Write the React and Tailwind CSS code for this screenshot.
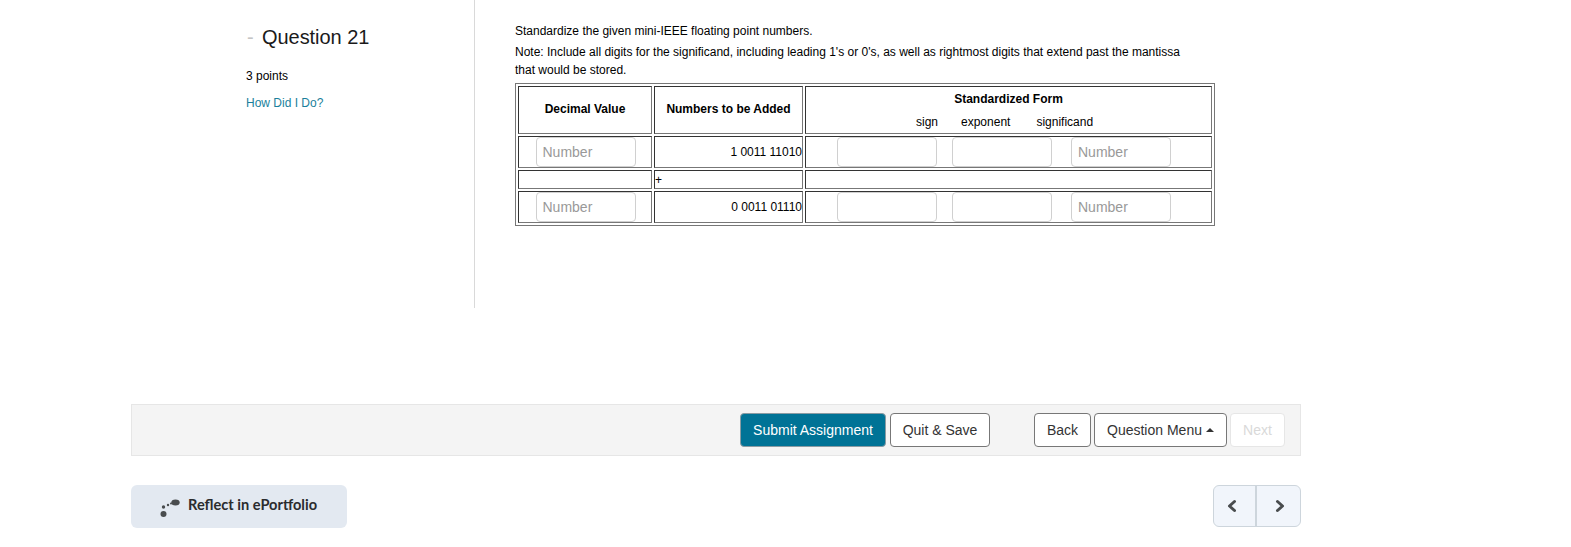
const numberInput = (placeholder, extra = '') => (
  <input
    readOnly
    placeholder={placeholder}
    className={`block w-[100px] h-[30px] px-[6px] bg-white border border-[#d0d0d0] rounded-[4px] text-[14px] placeholder:text-[#999999] outline-none ${extra}`}
  />
);

const cell = 'border border-t-[#333333] border-l-[#333333] border-r-[#777777] border-b-[#777777] p-0';

const btn = 'h-[34px] rounded-[4px] border text-[14px] flex items-center justify-center';

const StandardCells = () => (
  <td className={cell}>
    <div className="flex items-center h-[30px] pl-[31px]">
      {numberInput('')}
      {numberInput('', 'ml-[15px]')}
      {numberInput('Number', 'ml-[19px]')}
    </div>
  </td>
);

const App = () => (
  <div className="w-[1571px] h-[547px] bg-white text-black font-['Liberation_Sans',Arial,sans-serif] overflow-hidden">
    <div className="flex h-[308px]">
      {/* Question sidebar */}
      <div className="w-[475px] pl-[246px] border-r border-[#d9d9d9] shrink-0">
        <h2 className="flex items-center h-[24px] mt-[25px] text-[20px] leading-[24px] text-[#1a1a1a]">
          <span className="w-[16px] pl-[1px] text-[#c4c4c4]">-</span>
          <span className="tracking-[-0.05px]">Question 21</span>
        </h2>
        <p className="mt-[15px] text-[12px] leading-[24px]">3 points</p>
        <a className="block mt-[3px] text-[12px] leading-[24px] text-[#1a7f9c]">How Did I Do?</a>
      </div>

      {/* Question body */}
      <div className="pl-[40px] pt-[22px] text-[12px]">
        <p className="leading-[18px]">Standardize the given mini-IEEE floating point numbers.</p>
        <p className="mt-[3px] w-[680px] leading-[18px]">
          Note: Include all digits for the significand, including leading 1's or 0's, as well as rightmost digits that extend past the mantissa that would be stored.
        </p>
        <table className="mt-[4px] w-[700px] border border-[#777777] border-separate border-spacing-[2px] table-fixed">
          <colgroup>
            <col className="w-[134px]" />
            <col className="w-[149px]" />
            <col />
          </colgroup>
          <tbody>
            <tr className="h-[48px]">
              <td className={`${cell} text-center font-bold pb-[2px]`}>Decimal Value</td>
              <td className={`${cell} text-center font-bold pb-[2px]`}>Numbers to be Added</td>
              <td className={cell}>
                <div className="text-center font-bold leading-[18px]">Standardized Form</div>
                <div className="flex mt-[5px] leading-[18px] pl-[110px]">
                  <span>sign</span>
                  <span className="ml-[23px]">exponent</span>
                  <span className="ml-[26px]">significand</span>
                </div>
              </td>
            </tr>
            <tr className="h-[32px]">
              <td className={cell}><div className="flex justify-center pl-[1px]">{numberInput('Number')}</div></td>
              <td className={`${cell} text-right`}>1 0011 11010</td>
              <StandardCells />
            </tr>
            <tr className="h-[19px]">
              <td className={cell}></td>
              <td className={`${cell} leading-[14px]`}>+</td>
              <td className={cell}></td>
            </tr>
            <tr className="h-[32px]">
              <td className={cell}><div className="flex justify-center pl-[1px]">{numberInput('Number')}</div></td>
              <td className={`${cell} text-right`}>0 0011 01110</td>
              <StandardCells />
            </tr>
          </tbody>
        </table>
      </div>
    </div>

    {/* Assignment footer */}
    <div className="ml-[131px] mt-[96px] w-[1170px] h-[52px] bg-[#f4f4f4] border border-[#e6e6e6] flex items-center pl-[608px]">
      <button className={`${btn} w-[146px] bg-[#007396] border-[#8a9ba3] text-white`}>Submit Assignment</button>
      <button className={`${btn} w-[100px] ml-[4px] bg-white border-[#777777] text-[#333333]`}>Quit &amp; Save</button>
      <button className={`${btn} w-[57px] ml-[44px] bg-white border-[#777777] text-[#333333]`}>Back</button>
      <button className={`${btn} w-[133px] ml-[3px] bg-white border-[#777777] text-[#333333]`}>
        Question Menu
        <span className="ml-[4px] border-x-[4px] border-x-transparent border-b-[4px] border-b-[#333333]"></span>
      </button>
      <button className={`${btn} w-[55px] ml-[3px] bg-white border-[#e6e6e6] text-[#d9d9d9]`}>Next</button>
    </div>

    <div className="ml-[131px] mt-[29px] w-[1170px] flex items-start justify-between">
      <button className="w-[216px] h-[43px] bg-[#e3e9f1] rounded-[6px] flex items-center pl-[29px] pb-[3px] font-['Lato',sans-serif] font-bold text-[14.6px] text-[#2b2c2e]">
        <svg width="20" height="20" viewBox="0 0 20 20" className="mr-[8px] overflow-visible">
          <circle cx="3.5" cy="19" r="3" fill="#494c4e" />
          <circle cx="3.5" cy="12" r="1.7" fill="#494c4e" />
          <circle cx="8" cy="10" r="1.2" fill="#494c4e" />
          <circle cx="11" cy="8.5" r="1" fill="#494c4e" />
          <ellipse cx="15.5" cy="7.5" rx="4.2" ry="3" fill="#494c4e" />
        </svg>
        Reflect in ePortfolio
      </button>
      <div className="flex w-[88px] h-[42px] bg-[#f1f5fb] border border-[#cdd5dc] rounded-[6px]">
        <div className="w-[43px] border-r-2 border-[#cdd5dc] flex items-center justify-center pr-[5px]">
          <svg width="12" height="14" viewBox="0 0 12 14" fill="none" stroke="#494c4e" strokeWidth="3" strokeLinecap="round" strokeLinejoin="round">
            <path d="M8.5 2.5 L3.5 7 L8.5 11.5" />
          </svg>
        </div>
        <div className="flex-1 flex items-center justify-center pl-[3px]">
          <svg width="12" height="14" viewBox="0 0 12 14" fill="none" stroke="#494c4e" strokeWidth="3" strokeLinecap="round" strokeLinejoin="round">
            <path d="M3.5 2.5 L8.5 7 L3.5 11.5" />
          </svg>
        </div>
      </div>
    </div>
  </div>
);

export default App;
